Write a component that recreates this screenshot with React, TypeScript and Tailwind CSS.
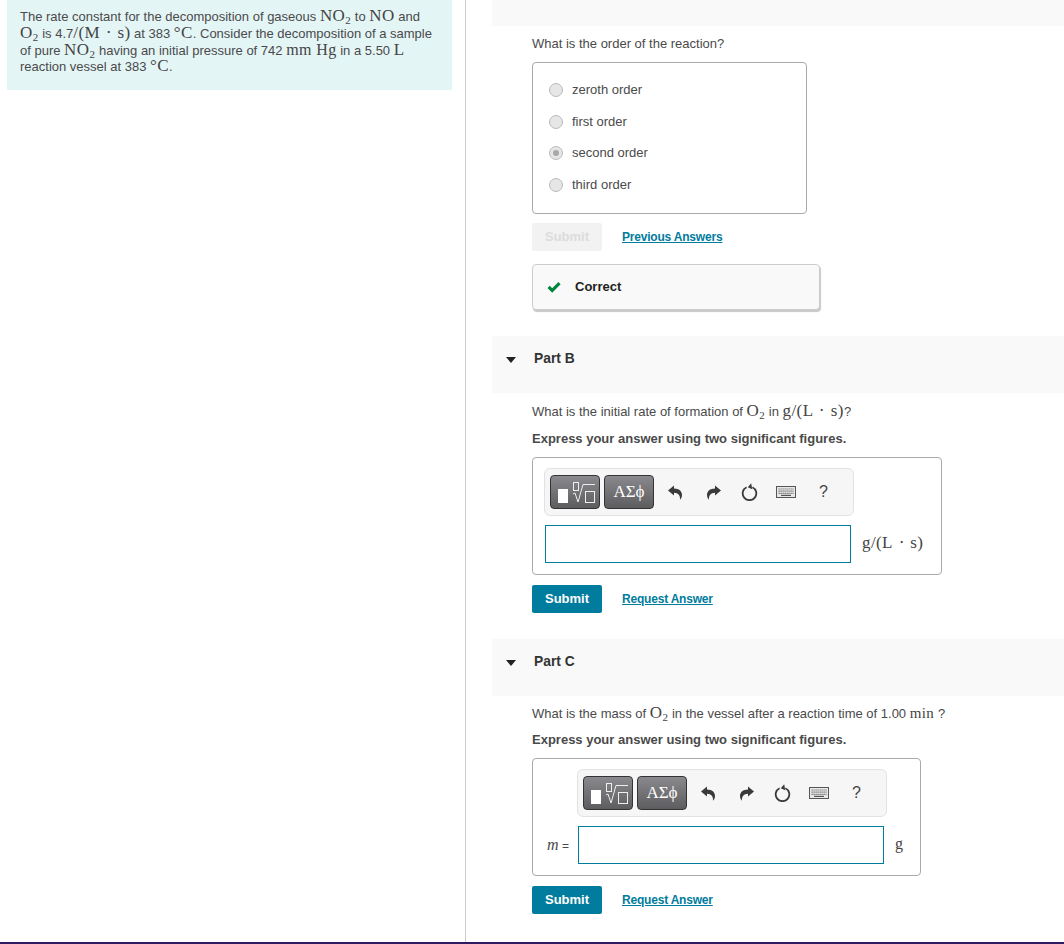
import type { ReactNode } from "react";

const SUBMIT_LINK = "text-[12px] font-bold tracking-[-0.2px] text-[#007c9e] underline";

/* Formeltext, sieht aus wie MathJax */
function M({ children, size = "text-[17px]" }: { children: ReactNode; size?: string }) {
  return <span className={"font-['Liberation_Serif',serif] leading-[0] tracking-[0.4px] text-[#444] " + size}>{children}</span>;
}

function Sub2() {
  return <span className="relative top-[3px] text-[11px] leading-[0]">2</span>;
}

/* Malpunkt mit Abstand wie im Formelsatz */
function Dot() {
  return <span className="mx-[6px]">⋅</span>;
}

function Undo({ flip = false }: { flip?: boolean }) {
  return (
    <svg width="14" height="15" viewBox="0 0 14 15" className={flip ? "-scale-x-100" : ""}>
      <path d="M0 5.5 L6 0.5 V3.6 C11 3.6 14 6.4 14 10 C14 12 13.2 13.6 12 14.8 C12.4 11 10.5 7.8 6 7.8 V10.6 Z" fill="#3a3a3a" />
    </svg>
  );
}

function Refresh() {
  return (
    <svg width="17" height="18" viewBox="0 0 17 18">
      <path d="M5.6 4.2 A6.8 6.8 0 1 0 11.4 4.2" fill="none" stroke="#3a3a3a" strokeWidth="1.8" />
      <path d="M10.2 0.2 L6.8 4.2 L11.2 6.2 Z" fill="#3a3a3a" />
    </svg>
  );
}

function Keyboard() {
  return (
    <svg width="20" height="12" viewBox="0 0 20 12">
      <rect x="0.5" y="0.5" width="19" height="11" fill="#e8e8e8" stroke="#555" />
      <path d="M2.5 3h15M2.5 5.2h15M2.5 7.4h15" stroke="#666" strokeWidth="1.2" strokeDasharray="1.2 0.8" />
      <path d="M5 9.4h10" stroke="#555" strokeWidth="1.2" />
    </svg>
  );
}

function Toolbar({ className }: { className: string }) {
  const knopf =
    "flex h-[34px] w-[50px] items-center justify-center rounded-[4px] border border-[#333] bg-gradient-to-b from-[#8a8a8e] to-[#5d5d60] text-white";
  return (
    <div className={"flex h-[48px] w-[310px] items-center rounded-[6px] border border-[#e2e2e2] bg-[#f6f6f6] pl-[5px] " + className}>
      <div className={knopf}>
        <svg width="48" height="32" viewBox="0 0 48 32">
          <rect x="7" y="13" width="10" height="14" fill="#fff" />
          <rect x="22.5" y="6.5" width="5" height="8" fill="none" stroke="#eee" />
          <path d="M22 18 L24 17 L27 26 L32 8.5 H44" fill="none" stroke="#eee" />
          <rect x="34.5" y="15.5" width="9" height="11" fill="none" stroke="#eee" />
        </svg>
      </div>
      <div className={knopf + " ml-[4px] font-['Liberation_Serif',serif] text-[17px]"}>ΑΣϕ</div>
      <div className="ml-[14px] flex w-[14px] justify-center"><Undo /></div>
      <div className="ml-[25px] flex w-[14px] justify-center"><Undo flip /></div>
      <div className="ml-[20px] flex w-[17px] justify-center"><Refresh /></div>
      <div className="ml-[18px] flex w-[20px] justify-center"><Keyboard /></div>
      <div className="ml-[23px] text-[16px] text-[#444]">?</div>
    </div>
  );
}

function PartBand({ name }: { name: string }) {
  return (
    <div className="flex h-[57px] bg-[#f9f9f9] pt-[15px]">
      <svg width="10" height="6" viewBox="0 0 10 6" className="ml-[14px] mt-[6px]">
        <path d="M0 0H10L5 6Z" fill="#222" />
      </svg>
      <span className="ml-[18px] text-[13.8px] font-bold leading-[16px] text-[#333]">{name}</span>
    </div>
  );
}

function Submit({ link }: { link: string }) {
  return (
    <div className="flex items-center">
      <button type="button" className="h-[28px] w-[70px] rounded-[2px] bg-[#007c9e] text-[13px] font-bold text-white">
        Submit
      </button>
      <a className={"ml-[20px] " + SUBMIT_LINK}>{link}</a>
    </div>
  );
}

const OPTIONEN = ["zeroth order", "first order", "second order", "third order"];

export default function App() {
  return (
    <div className="flex h-[944px] w-[1064px] flex-col overflow-hidden bg-white font-['Liberation_Sans',Arial,sans-serif] text-[13px] text-[#4a4a4a]">
      <div className="flex min-h-0 flex-1">
        {/* linke Spalte */}
        <div className="w-[466px] shrink-0 border-r border-[#c8ccd2]">
          <div className="ml-[7px] h-[90px] w-[445px] bg-[#e4f5f6] px-[13px] pt-[9px] leading-[16.8px]">
            The rate constant for the decomposition of gaseous <M size="text-[17px]">NO<Sub2 /></M> to <M size="text-[17px]">NO</M> and{" "}
            <br />
            <M size="text-[17px]">O<Sub2 /></M> is 4.7<M size="text-[17px]">/(M<Dot />s)</M> at 383 <M size="text-[17px]">°C</M>. Consider the decomposition of a sample
            <br />
            of pure <M size="text-[17px]">NO<Sub2 /></M> having an initial pressure of 742 <M size="text-[16px]">mm Hg</M> in a 5.50 <M size="text-[17px]">L</M>{" "}
            <br />
            reaction vessel at 383 <M size="text-[17px]">°C</M>.
          </div>
        </div>

        {/* rechte Spalte */}
        <div className="ml-[26px] min-w-0 flex-1">
          <div className="h-[26px] bg-[#f9f9f9]" />
          <div className="pl-[40px]">
            <p className="mt-[10px] h-[16px] leading-[16px]">What is the order of the reaction?</p>
            <div className="mt-[10px] flex h-[152px] w-[275px] flex-col rounded-[4px] border border-[#aaa] pl-[16px] pt-[11px]">
              {OPTIONEN.map((o, i) => (
                <div key={o} className="flex h-[31.7px] items-center">
                  <span className="flex h-[14px] w-[14px] items-center justify-center rounded-full border border-[#bbb] bg-[#e6e6e6]">
                    {i === 2 && <span className="h-[6px] w-[6px] rounded-full bg-[#a8a8a8]" />}
                  </span>
                  <span className="ml-[9px] text-[13px]">{o}</span>
                </div>
              ))}
            </div>
            <div className="mt-[9px] flex items-center">
              <span className="flex h-[28px] w-[70px] items-center justify-center rounded-[2px] bg-[#f2f2f2] text-[13px] font-bold text-[#dcdcdc]">
                Submit
              </span>
              <a className={"ml-[20px] " + SUBMIT_LINK}>Previous Answers</a>
            </div>
            <div className="mt-[13px] flex h-[46px] w-[288px] items-center rounded-[4px] border border-[#ccc] bg-[#f9f9f9] pl-[14px] shadow-[1px_2px_1px_#c8c8c8]">
              <svg width="14" height="11" viewBox="0 0 14 11">
                <path d="M0.5 6 L2.8 3.8 L5.2 6.2 L11.4 0 L13.6 2.2 L5.2 10.8 Z" fill="#00843d" />
              </svg>
              <span className="ml-[14px] text-[13px] font-bold text-[#222]">Correct</span>
            </div>
          </div>

          <div className="mt-[26px]">
            <PartBand name="Part B" />
            <div className="pl-[40px]">
              <p className="mt-[9px] h-[20px] leading-[20px]">
                What is the initial rate of formation of <M>O<Sub2 /></M> in <M>g/(L<Dot />s)</M>?
              </p>
              <p className="mt-[9px] h-[16px] font-bold leading-[16px]">Express your answer using two significant figures.</p>
              <div className="mt-[10px] h-[118px] w-[410px] rounded-[4px] border border-[#aaa] pl-[11px] pt-[10px]">
                <Toolbar className="" />
                <div className="mt-[9px] flex items-center">
                  <div className="ml-[1px] h-[38px] w-[306px] border border-[#007c9e]" />
                  <span className="ml-[11px]"><M size="text-[17px]">g/(L<Dot />s)</M></span>
                </div>
              </div>
              <div className="mt-[10px]"><Submit link="Request Answer" /></div>
            </div>
          </div>

          <div className="mt-[26px]">
            <PartBand name="Part C" />
            <div className="pl-[40px]">
              <p className="mt-[8px] h-[20px] leading-[20px]">
                What is the mass of <M>O<Sub2 /></M> in the vessel after a reaction time of 1.00 <M size="text-[15px]">min</M> ?
              </p>
              <p className="mt-[8px] h-[16px] font-bold leading-[16px]">Express your answer using two significant figures.</p>
              <div className="mt-[10px] h-[118px] w-[389px] rounded-[4px] border border-[#aaa] pt-[10px]">
                <Toolbar className="ml-[44px]" />
                <div className="mt-[9px] flex items-center">
                  <span className="w-[36px] text-right text-[12px] leading-none">
                    <span className="font-['Liberation_Serif',serif] text-[16px] italic">m</span> =
                  </span>
                  <div className="ml-[9px] h-[38px] w-[306px] border border-[#007c9e]" />
                  <span className="ml-[11px]"><M size="text-[16px]">g</M></span>
                </div>
              </div>
              <div className="mt-[10px]"><Submit link="Request Answer" /></div>
            </div>
          </div>
        </div>
      </div>
      <div className="h-[2px] shrink-0 bg-[#2e1a5e]" />
    </div>
  );
}
